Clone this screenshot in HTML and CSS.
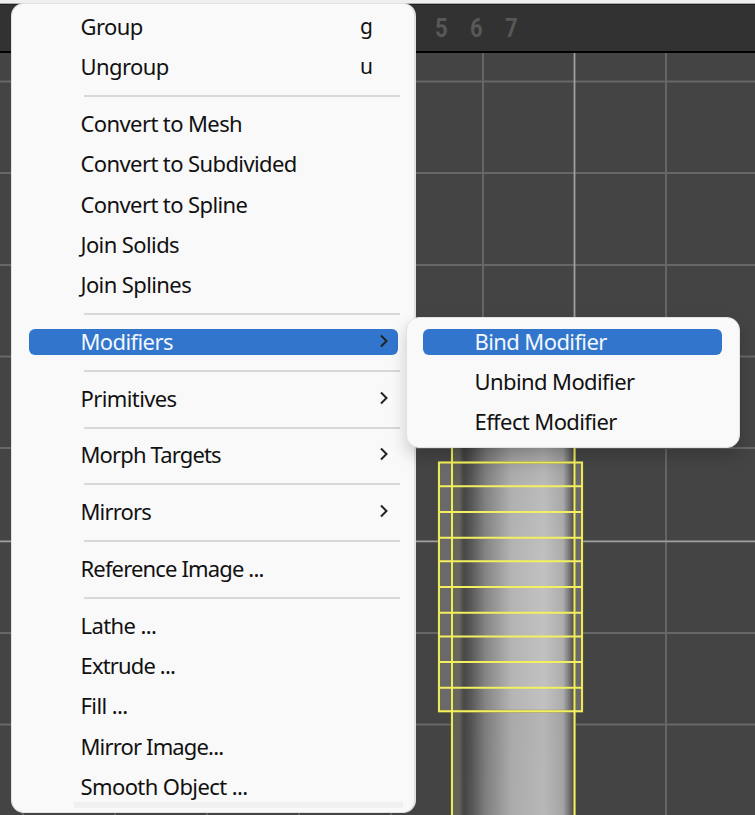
FILE: index.html
```
<!DOCTYPE html>
<html lang="en">
<head>
    <meta charset="UTF-8">
    <meta name="viewport" content="width=device-width, initial-scale=1.0">
    <title>Modifiers</title>
    <link rel="stylesheet" href="styles.css">
</head>
<body>

<div class="editor">
    <div class="window-edge"></div>
    <div class="toolbar">
        <span>5</span>
        <span>6</span>
        <span>7</span>
    </div>

    <svg class="viewport" width="755" height="762" viewBox="0 53 755 762">
        <defs>
            <linearGradient id="cylinder">
                <stop offset="0" stop-color="#66665c"/>
                <stop offset="0.05" stop-color="#686860"/>
                <stop offset="0.09" stop-color="#484848"/>
                <stop offset="0.15" stop-color="#585858"/>
                <stop offset="0.27" stop-color="#858585"/>
                <stop offset="0.48" stop-color="#b4b4b4"/>
                <stop offset="0.75" stop-color="#c1c1c1"/>
                <stop offset="0.91" stop-color="#adadad"/>
                <stop offset="0.96" stop-color="#777"/>
                <stop offset="1" stop-color="#4c4c4c"/>
            </linearGradient>
            <linearGradient id="fade" x1="0" y1="0" x2="0" y2="1">
                <stop offset="0" stop-opacity="0.16"/>
                <stop offset="0.12" stop-opacity="0.03"/>
                <stop offset="0.35" stop-opacity="0"/>
                <stop offset="0.722" stop-opacity="0"/>
                <stop offset="0.725" stop-opacity="0.06"/>
                <stop offset="1" stop-opacity="0.05"/>
            </linearGradient>
        </defs>
        <!-- grid -->
        <path class="grid" d="M23 53V815M115 53V815M207 53V815M299 53V815M391 53V815M483 53V815M666 53V815"/>
        <path class="grid" d="M0 81.500H755M0 173H755M0 265H755M0 356.500H755M0 448H755M0 633H755M0 724.500H755"/>
        <path class="axis" d="M574.500 53V815M0 541.300H755"/>
        <!-- cylinder -->
        <rect class="bounds" x="439" y="462" width="143" height="249"/>
        <rect x="453" y="440" width="121" height="375" fill="url(#cylinder)"/>
        <rect x="453" y="440" width="121" height="375" fill="url(#fade)"/>
        <path class="wire-edge" d="M452 440V815M574.500 440V815M439 462.500H582V711.300H439Z"/>
        <path class="wire" d="M452 440V815M574.500 440V815"/>
        <path class="wire" d="M439 462.500H582V711.300H439Z"/>
        <path class="wire" d="M439 486.300H582M439 512H582M439 537.700H582M439 561.300H582M439 587H582M439 612.700H582M439 636.500H582M439 662H582M439 687.700H582"/>
    </svg>

    <ul class="menu main-menu">
        <li>Group<kbd>g</kbd></li>
        <li>Ungroup<kbd>u</kbd></li>
        <li class="separator"></li>
        <li>Convert to Mesh</li>
        <li>Convert to Subdivided</li>
        <li>Convert to Spline</li>
        <li>Join Solids</li>
        <li>Join Splines</li>
        <li class="separator"></li>
        <li class="active">Modifiers<svg class="arrow" viewBox="0 0 10 14"><path d="M2 1.500L7.500 7L2 12.500"/></svg></li>
        <li class="separator"></li>
        <li>Primitives<svg class="arrow" viewBox="0 0 10 14"><path d="M2 1.500L7.500 7L2 12.500"/></svg></li>
        <li class="separator"></li>
        <li class="tight">Morph Targets<svg class="arrow" viewBox="0 0 10 14"><path d="M2 1.500L7.500 7L2 12.500"/></svg></li>
        <li class="separator"></li>
        <li class="tight">Mirrors<svg class="arrow" viewBox="0 0 10 14"><path d="M2 1.500L7.500 7L2 12.500"/></svg></li>
        <li class="separator"></li>
        <li class="tight">Reference Image ...</li>
        <li class="separator"></li>
        <li>Lathe ...</li>
        <li class="tight">Extrude ...</li>
        <li>Fill ...</li>
        <li class="tight">Mirror Image...</li>
        <li>Smooth Object ...</li>
        <li class="menu-end"></li>
    </ul>

    <ul class="menu submenu">
        <li class="active">Bind Modifier</li>
        <li>Unbind Modifier</li>
        <li>Effect Modifier</li>
    </ul>
</div>

</body>
</html>
```
FILE: styles.css
```
* {
    box-sizing: border-box;
}

body {
    margin: 0;
    overflow: hidden;
    background-color: #444;
    font-family: "Noto Sans", "Open Sans", sans-serif;
}

.editor {
    position: relative;
    width: 755px;
    height: 815px;
    overflow: hidden;
}

.window-edge {
    height: 4px;
    background-color: #efefef;
    border-bottom: 1px solid #aaa;
}

.toolbar {
    display: flex;
    gap: 22px;
    height: 49px;
    padding: 8px 0 0 435px;
    background-color: #323232;
    border-top: 1px solid #222;
    border-bottom: 2px solid #000;
    color: #585858;
    font-family: Roboto, sans-serif;
    font-size: 26px;
    font-weight: bold;
    line-height: 31px;
}

.toolbar span {
    width: 13px;
    transform: scaleX(0.85);
    transform-origin: left;
}

.viewport {
    display: block;
}

.grid {
    fill: none;
    stroke: #676767;
    stroke-width: 1.9;
}

.axis {
    fill: none;
    stroke: #a0a0a0;
    stroke-width: 1.8;
}

.bounds {
    fill: #69696b;
}

.wire-edge {
    fill: none;
    stroke: #77772c;
    stroke-width: 3;
    opacity: 0.5;
}

.wire {
    fill: none;
    stroke: #f3f060;
    stroke-width: 1.9;
}

.menu {
    display: flex;
    flex-direction: column;
    position: absolute;
    margin: 0;
    list-style: none;
    background-color: #f9f9f9;
    border: 1px solid #e2e2e2;
    border-radius: 13px;
    color: #111;
    font-size: 22px;
    letter-spacing: -0.6px;
    white-space: nowrap;
}

.menu li {
    display: flex;
    flex-shrink: 0;
    align-items: center;
    height: 40.3px;
    padding: 0 12px 3px 51.5px;
    line-height: 26px;
}

.menu li.tight {
    letter-spacing: -0.85px;
}

.menu li.active {
    height: 26px;
    margin: 7.150px 0;
    padding-bottom: 2px;
    border-radius: 6px;
    background-color: #3275cd;
    color: #f3f7fc;
}

.menu li.separator {
    height: 2px;
    margin: 7.250px -2px 7.250px 55px;
    padding: 0;
    background-color: #d8d8d8;
}

.main-menu {
    left: 11px;
    top: 3px;
    width: 405px;
    height: 810px;
    padding: 3.200px 16px 0 17px;
    border-right-width: 2px;
}

.menu li.menu-end {
    height: 6px;
    margin: -6px -5px 0 45px;
    padding: 0;
    background-color: #f0f0f0;
}

.main-menu kbd {
    width: 12px;
    margin-left: auto;
    margin-right: 14px;
    font-family: inherit;
    font-size: 21px;
    text-align: left;
}

.arrow {
    width: 10px;
    height: 14px;
    margin-left: auto;
    margin-right: -3px;
    fill: none;
    stroke: #222;
    stroke-width: 2;
}

.submenu {
    left: 406px;
    top: 317px;
    width: 334px;
    height: 131px;
    padding: 4px 17px 0 16px;
    box-shadow: 0 8px 16px rgba(0, 0, 0, 0.18);
}
```
